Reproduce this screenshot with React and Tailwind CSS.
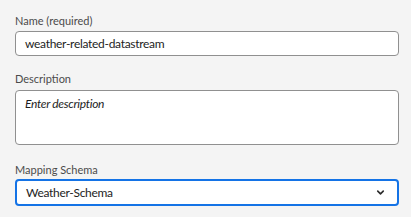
import { ChevronDown } from "lucide-react";

function Label({ children }) {
  return (
    <div className="h-[15px] text-[11px] leading-[15px] text-[#4b4b4b]">{children}</div>
  );
}

export default function App() {
  return (
    <div
      className="w-[411px] h-[217px] bg-[#f4f4f4] px-[15px] pt-[13px] flex flex-col"
      style={{ fontFamily: "Lato, 'Liberation Sans', sans-serif" }}
    >
      {/* Name */}
      <Label>Name (required)</Label>
      <div className="mt-[3px] h-[25px] w-[384px] rounded-[4px] border border-[#909090] bg-white px-[9px] flex items-center text-[12px] tracking-[-0.3px] text-[#1d1d1d]">
        weather-related-datastream
      </div>

      {/* Description */}
      <div className="mt-[15px]">
        <Label>Description</Label>
      </div>
      <div className="mt-[4px] h-[55px] w-[384px] rounded-[4px] border border-[#909090] bg-white px-[9px] pt-[4px] text-[12px] tracking-[-0.3px] italic text-[#1d1d1d]">
        Enter description
      </div>

      {/* Mapping schema */}
      <div className="mt-[17px]">
        <Label>Mapping Schema</Label>
      </div>
      <div className="mt-[2px] h-[27px] w-[384px] rounded-[4px] border-2 border-[#1473e6] bg-white pl-[9px] pr-[11px] flex items-center justify-between text-[12px] tracking-[-0.3px] text-[#1d1d1d]">
        <span>Weather-Schema</span>
        <ChevronDown size={11} strokeWidth={3.5} className="text-[#2c2c2c]" />
      </div>
    </div>
  );
}
